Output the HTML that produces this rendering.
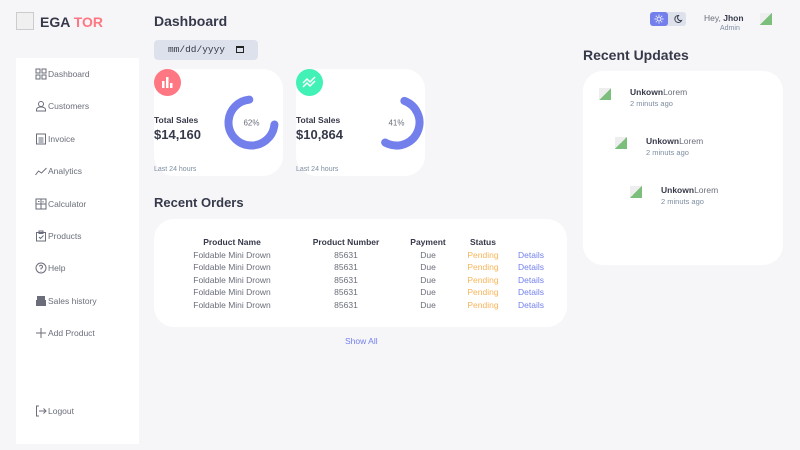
<!DOCTYPE html>
<html><head><style>
*{margin:0;padding:0;box-sizing:border-box}
body{width:800px;height:450px;background:#f6f6f9;font-family:"Liberation Sans",sans-serif;position:relative;overflow:hidden;color:#363949}
.a{position:absolute}
.side{left:16px;top:58px;width:123px;height:386px;background:#fff}
.item{position:absolute;left:19px;font-size:8.5px;color:#6b6e7a;display:flex;align-items:center;gap:1px}
.item svg{width:12px;height:12px}
.card{background:#fff;border-radius:20px}
.muted{color:#7d8da1}
table{border-collapse:collapse;font-size:8.5px}
td,th{text-align:center;height:12.5px;padding:0}
th{color:#363949;font-weight:bold}
td{color:#6b6e7a}
.p{color:#f7b45a}.d{color:#7380ec}
.img{width:12px;height:12px;background:linear-gradient(135deg,#eee 50%,#7cbf7c 50%)}
</style></head><body>
<div class="a" style="left:16px;top:12px;width:18px;height:18px;border:1px solid #ccc;background:#f0f0f0"></div>
<div class="a" style="left:40px;top:14px;font-size:14px;font-weight:bold">EGA <span style="color:#ff7782">TOR</span></div>

<div class="a side">
<div class="item" style="top:10px"><svg viewBox="0 0 12 12" fill="none" stroke="#6b6e7a"><rect x="1" y="1" width="4" height="4"/><rect x="7" y="1" width="4" height="4"/><rect x="1" y="7" width="4" height="4"/><rect x="7" y="7" width="4" height="4"/></svg>Dashboard</div>
<div class="item" style="top:42px"><svg viewBox="0 0 12 12" fill="none" stroke="#6b6e7a"><circle cx="6" cy="4" r="2.5"/><path d="M1.5 11v-1.5c0-1.5 2-2.5 4.5-2.5s4.5 1 4.5 2.5V11z"/></svg>Customers</div>
<div class="item" style="top:75px"><svg viewBox="0 0 12 12" fill="none" stroke="#6b6e7a"><rect x="1.5" y="1" width="9" height="10"/><path d="M3.5 5h5M3.5 7h5M3.5 9h5"/></svg>Invoice</div>
<div class="item" style="top:107px"><svg viewBox="0 0 12 12" fill="none" stroke="#6b6e7a"><path d="M0.5 10l3-4 3 2 5-5"/></svg>Analytics</div>
<div class="item" style="top:140px"><svg viewBox="0 0 12 12" fill="none" stroke="#6b6e7a"><rect x="1" y="1" width="10" height="10"/><path d="M6 1v10M1 6h10M3 3.5h1.5M8 3v1.5"/></svg>Calculator</div>
<div class="item" style="top:172px"><svg viewBox="0 0 12 12" fill="none" stroke="#6b6e7a"><path d="M1.5 2.5h9v8.5h-9z M4 1h4v2.5H4z M4 7l1.5 1.5 3-3"/></svg>Products</div>
<div class="item" style="top:204px"><svg viewBox="0 0 12 12" fill="none" stroke="#6b6e7a"><circle cx="6" cy="6" r="5"/><path d="M4.5 4.5a1.5 1.5 0 1 1 1.5 1.7V7.5M6 9v.5"/></svg>Help</div>
<div class="item" style="top:237px"><svg viewBox="0 0 12 12" fill="#6b6e7a"><rect x="2" y="1" width="8" height="4"/><rect x="1" y="5" width="10" height="6"/></svg>Sales history</div>
<div class="item" style="top:269px"><svg viewBox="0 0 12 12" fill="none" stroke="#6b6e7a"><path d="M6 1v10M1 6h10"/></svg>Add Product</div>
<div class="item" style="top:347px"><svg viewBox="0 0 12 12" fill="none" stroke="#6b6e7a"><path d="M4 1H1.5v10H4M4 6h7M8.5 3.5L11 6 8.5 8.5"/></svg>Logout</div>
</div>

<div class="a" style="left:154px;top:13px;font-size:14px;font-weight:bold">Dashboard</div>
<div class="a" style="left:154px;top:40px;width:104px;height:20px;background:#dce1eb;border-radius:4px;font-family:'Liberation Mono',monospace;font-size:9.5px;color:#363949;padding:4px 0 0 14px">mm/dd/yyyy &nbsp;<span style="display:inline-block;width:8px;height:7px;border:1.3px solid #222;border-top-width:2.5px;vertical-align:-1px"></span></div>

<div class="a card" style="left:154px;top:69px;width:129px;height:107px"></div>
<div class="a" style="left:154px;top:69px;width:27px;height:27px;border-radius:50%;background:#ff7782"><svg viewBox="0 0 27 27" width="27" height="27" fill="#fff"><rect x="8" y="12" width="2.5" height="7"/><rect x="12" y="8" width="2.5" height="11"/><rect x="16" y="14" width="2.5" height="5"/></svg></div>
<div class="a" style="left:154px;top:115px;font-size:8.5px;font-weight:bold">Total Sales</div>
<div class="a" style="left:154px;top:127px;font-size:13px;font-weight:bold">$14,160</div>
<div class="a muted" style="left:154px;top:166px;font-size:7px">Last 24 hours</div>
<svg class="a" style="left:224px;top:95px" width="55" height="55" viewBox="0 0 55 55"><circle cx="27.5" cy="27.5" r="23" fill="none" stroke="#7380ec" stroke-width="8" stroke-linecap="round" stroke-dasharray="104 200" transform="rotate(5 27.5 27.5)"/><text x="27.5" y="30.5" text-anchor="middle" font-size="8" fill="#6b6e7a" font-family="Liberation Sans">62%</text></svg>

<div class="a card" style="left:296px;top:69px;width:129px;height:107px"></div>
<div class="a" style="left:296px;top:69px;width:27px;height:27px;border-radius:50%;background:#41f1b6"><svg viewBox="0 0 27 27" width="27" height="27" fill="none" stroke="#fff" stroke-width="1.5"><path d="M7 14l4-4 3 3 5-5M7 18l4-4 3 3 5-5"/></svg></div>
<div class="a" style="left:296px;top:115px;font-size:8.5px;font-weight:bold">Total Sales</div>
<div class="a" style="left:296px;top:127px;font-size:13px;font-weight:bold">$10,864</div>
<div class="a muted" style="left:296px;top:166px;font-size:7px">Last 24 hours</div>
<svg class="a" style="left:369px;top:95px" width="55" height="55" viewBox="0 0 55 55"><circle cx="27.5" cy="27.5" r="23" fill="none" stroke="#7380ec" stroke-width="8" stroke-linecap="round" stroke-dasharray="76 200" transform="rotate(-70 27.5 27.5)"/><text x="27.5" y="30.5" text-anchor="middle" font-size="8" fill="#6b6e7a" font-family="Liberation Sans">41%</text></svg>

<div class="a" style="left:154px;top:195px;font-size:13px;font-weight:bold">Recent Orders</div>
<div class="a card" style="left:154px;top:219px;width:413px;height:108px"></div>
<table class="a" style="left:180px;top:236px;width:364px">
<tr><th style="width:104px">Product Name</th><th style="width:124px">Product Number</th><th style="width:40px">Payment</th><th style="width:70px">Status</th><th>&nbsp;</th></tr>
<tr><td>Foldable Mini Drown</td><td>85631</td><td>Due</td><td class="p">Pending</td><td class="d">Details</td></tr>
<tr><td>Foldable Mini Drown</td><td>85631</td><td>Due</td><td class="p">Pending</td><td class="d">Details</td></tr>
<tr><td>Foldable Mini Drown</td><td>85631</td><td>Due</td><td class="p">Pending</td><td class="d">Details</td></tr>
<tr><td>Foldable Mini Drown</td><td>85631</td><td>Due</td><td class="p">Pending</td><td class="d">Details</td></tr>
<tr><td>Foldable Mini Drown</td><td>85631</td><td>Due</td><td class="p">Pending</td><td class="d">Details</td></tr>
</table>
<div class="a" style="left:345px;top:336px;font-size:8.5px;color:#7380ec">Show All</div>

<div class="a" style="left:650px;top:12px;width:36px;height:14px;background:#dce1eb;border-radius:3px"></div>
<div class="a" style="left:650px;top:12px;width:18px;height:14px;background:#7380ec;border-radius:3px"><svg viewBox="0 0 18 14" width="18" height="14" fill="none" stroke="#fff" stroke-width="0.9"><circle cx="9" cy="7" r="2"/><path d="M9 2.5v1.3M9 10.2v1.3M4.5 7h1.3M12.2 7h1.3M5.8 3.8l.9.9M11.3 9.3l.9.9M5.8 10.2l.9-.9M11.3 4.7l.9-.9"/></svg></div>
<svg class="a" style="left:672px;top:13px" width="12" height="12" viewBox="0 0 12 12" fill="none" stroke="#363949" stroke-width="1"><path d="M6.5 2.5a3.5 3.5 0 1 0 3 5a3 3 0 0 1 -3 -5z"/></svg>
<div class="a" style="left:704px;top:13px;font-size:8.5px;color:#6b6e7a">Hey, <b style="color:#363949">Jhon</b></div>
<div class="a muted" style="left:720px;top:25px;font-size:7px">Admin</div>
<div class="a img" style="left:760px;top:13px"></div>

<div class="a" style="left:583px;top:47px;font-size:14px;font-weight:bold">Recent Updates</div>
<div class="a card" style="left:583px;top:71px;width:200px;height:194px"></div>
<div class="a img" style="left:599px;top:88px"></div>
<div class="a" style="left:630px;top:87px;font-size:8.5px;color:#6b6e7a"><b style="color:#363949">Unkown</b>Lorem</div>
<div class="a muted" style="left:630px;top:99px;font-size:7.5px">2 minuts ago</div>
<div class="a img" style="left:615px;top:137px"></div>
<div class="a" style="left:646px;top:136px;font-size:8.5px;color:#6b6e7a"><b style="color:#363949">Unkown</b>Lorem</div>
<div class="a muted" style="left:646px;top:148px;font-size:7.5px">2 minuts ago</div>
<div class="a img" style="left:630px;top:186px"></div>
<div class="a" style="left:661px;top:185px;font-size:8.5px;color:#6b6e7a"><b style="color:#363949">Unkown</b>Lorem</div>
<div class="a muted" style="left:661px;top:197px;font-size:7.5px">2 minuts ago</div>
</body></html>
